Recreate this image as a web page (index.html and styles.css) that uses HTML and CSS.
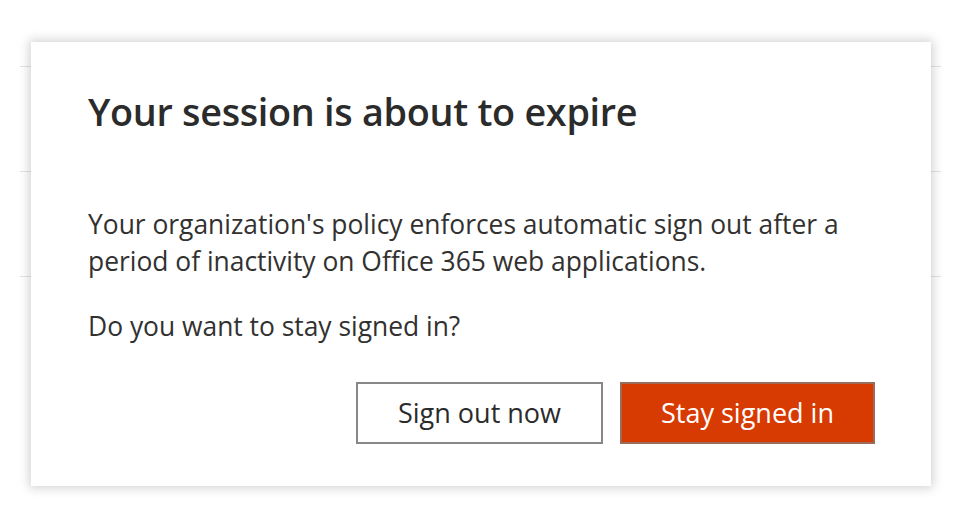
FILE: index.html
```html
<!DOCTYPE html>
<html lang="en">
<head>
<meta charset="utf-8">
<title>Session expiring</title>
<link rel="stylesheet" href="styles.css">
</head>
<body>
<div class="page">
  <div class="rows">
    <div class="row"></div>
    <div class="row"></div>
    <div class="row"></div>
  </div>
  <div class="dialog" role="dialog" aria-labelledby="dlg-title">
    <h1 class="dialog-title" id="dlg-title">Your session is about to expire</h1>
    <p class="dialog-text">Your organization's policy enforces automatic sign out after a period of inactivity on Office 365 web applications.</p>
    <p class="dialog-text dialog-question">Do you want to stay signed in?</p>
    <div class="dialog-actions">
      <button class="btn btn-secondary" type="button">Sign out now</button>
      <button class="btn btn-primary" type="button">Stay signed in</button>
    </div>
  </div>
</div>
</body>
</html>
```

FILE: styles.css
```css
html, body {
  margin: 0;
  padding: 0;
  background: #ffffff;
}
body {
  font-family: "Open Sans", "Noto Sans", "Liberation Sans", sans-serif;
  color: #323130;
  width: 963px;
  height: 526px;
  overflow: hidden;
}
.page {
  position: relative;
  width: 963px;
  height: 526px;
}
.rows {
  margin-left: 20px;
  width: 921px;
  padding-top: 66px;
}
.row {
  height: 105px;
  border-top: 1px solid #e3e3e3;
  box-sizing: border-box;
}
.dialog {
  position: absolute;
  left: 31px;
  top: 42px;
  width: 900px;
  height: 444px;
  box-sizing: border-box;
  background: #ffffff;
  box-shadow: 0 0 10px 2px rgba(0, 0, 0, 0.18);
  padding: 0 56px 0 57px;
  display: flex;
  flex-direction: column;
}
.dialog-title {
  margin: 45px 0 0 0;
  font-size: 37.8px;
  font-weight: 600;
  line-height: 50px;
  letter-spacing: -0.3px;
  color: #2b2b2b;
}
.dialog-text {
  margin: 69px 0 0 0;
  font-size: 26.4px;
  line-height: 37px;
  font-weight: 400;
  color: #323130;
}
.dialog-question {
  margin-top: 28px;
}
.dialog-actions {
  margin-top: 37px;
  display: flex;
  justify-content: flex-end;
  gap: 17px;
}
.btn {
  height: 62px;
  box-sizing: border-box;
  font-family: inherit;
  font-size: 27px;
  font-weight: 400;
  padding: 0 0 2px 0;
  cursor: pointer;
  border-radius: 0;
}
.btn-secondary {
  width: 247px;
  background: #ffffff;
  color: #2b2b2b;
  border: 2px solid #8a8886;
}
.btn-primary {
  width: 255px;
  background: #d83b01;
  color: #ffffff;
  border: 2px solid #9a6c5a;
}
```
